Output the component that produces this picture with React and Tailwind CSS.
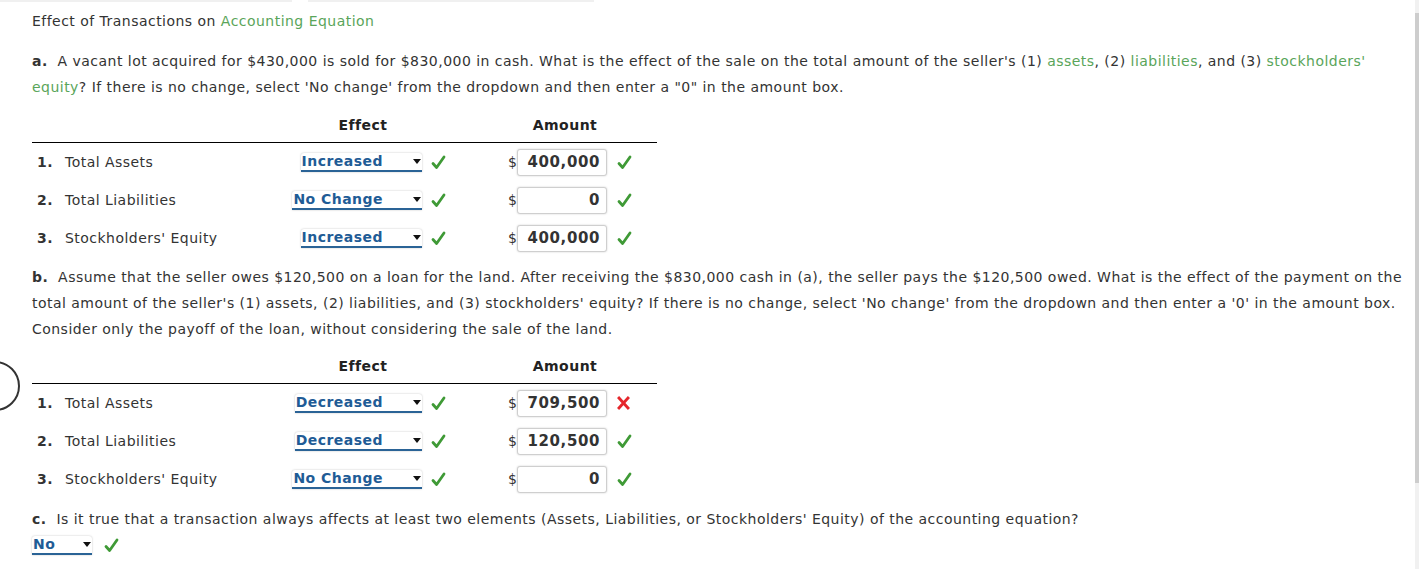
import React from "react";

const FONT = { fontFamily: '"DejaVu Sans", Verdana, sans-serif' };

function Check() {
  return (
    <svg width="15" height="15" viewBox="0 0 15 15" className="block">
      <path d="M2 8.5 L5.6 12.5 L13 2" fill="none" stroke="#3f9a36" strokeWidth="2.8" strokeLinecap="round" strokeLinejoin="round" />
    </svg>
  );
}

function Cross() {
  return (
    <svg width="13" height="14" viewBox="0 0 13 14" className="block">
      <path d="M2 2 L11 12 M11 2 L2 12" fill="none" stroke="#e5262b" strokeWidth="2.8" strokeLinecap="square" />
    </svg>
  );
}

function Arrow() {
  return (
    <svg width="8" height="5" viewBox="0 0 8 5" className="block">
      <path d="M0 0 L8 0 L4 5 Z" fill="#111" />
    </svg>
  );
}

function Select({ value, gap = "ml-[30px]" }) {
  return (
    <div className="inline-flex items-center h-[19px] px-[1px] bg-white rounded-t-[3px] border-b-2 border-[#2a6396] shadow-[0_0_2px_rgba(0,0,0,0.25)]">
      <span className="font-bold text-[#1f5c96] leading-[16px]">{value}</span>
      <span className={gap}>
        <Arrow />
      </span>
    </div>
  );
}

function Row({ n, label, effect, amount, ok }) {
  return (
    <div className="grid grid-cols-[248px_166px_211px] h-[38px] items-center">
      <div className="flex items-center pl-[5px]">
        <span className="font-bold w-[28px]">{n}.</span>
        <span>{label}</span>
      </div>
      <div className="flex items-center justify-end gap-[9px]">
        <Select value={effect} />
        <Check />
      </div>
      <div className="flex items-center pl-[62px]">
        <span className="w-[9px]">$</span>
        <div className="w-[90px] h-[27px] flex items-center justify-end pr-[6px] bg-white border border-[#cfcfcf] rounded-[3px] shadow-[0_0_2px_rgba(0,0,0,0.2)] font-bold text-[15px] tracking-[0.6px]">
          {amount}
        </div>
        <span className="ml-[10px]">{ok ? <Check /> : <Cross />}</span>
      </div>
    </div>
  );
}

function Table({ rows, top }) {
  return (
    <div className={`w-[625px] ${top}`}>
      <div className="grid grid-cols-[248px_166px_211px] border-b border-black pb-[7px] font-bold text-[#222] leading-[20px]">
        <div />
        <div className="text-center">Effect</div>
        <div className="text-center pl-[27px]">Amount</div>
      </div>
      {rows.map((r) => (
        <Row key={r.n} {...r} />
      ))}
    </div>
  );
}

export default function App() {
  const G = "text-[#5aa55a]";
  return (
    <div className="w-[1419px] h-[569px] bg-white overflow-hidden flex text-[14px] tracking-[0.47px] text-[#333]" style={FONT}>
      <div className="flex-1 relative">
        <div className="flex gap-[16px] h-[2px]">
          <div className="w-[292px] bg-[#f0f0f0]" />
          <div className="w-[286px] bg-[#f0f0f0]" />
        </div>
        <div className="absolute left-[-30px] top-[361px] w-[50px] h-[50px] rounded-full border-2 border-[#333]" />
        <div className="pl-[32px] pt-[9px]">
          <div className="leading-[20px]">
            Effect of Transactions on <span className={G}>Accounting Equation</span>
          </div>
          <div className="mt-[17px] leading-[26px] whitespace-nowrap">
            <span className="font-bold">a.</span>&nbsp; A vacant lot acquired for $430,000 is sold for $830,000 in cash. What is the effect of the sale on the total amount of the seller's (1) <span className={G}>assets</span>, (2) <span className={G}>liabilities</span>, and (3) <span className={G}>stockholders'</span>
            <br />
            <span className={G}>equity</span>? If there is no change, select 'No change' from the dropdown and then enter a "0" in the amount box.
          </div>
          <Table
            top="mt-[15px]"
            rows={[
              { n: 1, label: "Total Assets", effect: "Increased", amount: "400,000", ok: true },
              { n: 2, label: "Total Liabilities", effect: "No Change", amount: "0", ok: true },
              { n: 3, label: "Stockholders' Equity", effect: "Increased", amount: "400,000", ok: true },
            ]}
          />
          <div className="mt-[7px] leading-[26px] whitespace-nowrap">
            <span className="font-bold">b.</span>&nbsp; Assume that the seller owes $120,500 on a loan for the land. After receiving the $830,000 cash in (a), the seller pays the $120,500 owed. What is the effect of the payment on the
            <br />
            total amount of the seller's (1) assets, (2) liabilities, and (3) stockholders' equity? If there is no change, select 'No change' from the dropdown and then enter a '0' in the amount box.
            <br />
            Consider only the payoff of the loan, without considering the sale of the land.
          </div>
          <Table
            top="mt-[14px]"
            rows={[
              { n: 1, label: "Total Assets", effect: "Decreased", amount: "709,500", ok: false },
              { n: 2, label: "Total Liabilities", effect: "Decreased", amount: "120,500", ok: true },
              { n: 3, label: "Stockholders' Equity", effect: "No Change", amount: "0", ok: true },
            ]}
          />
          <div className="mt-[8px] leading-[26px] whitespace-nowrap">
            <span className="font-bold">c.</span>&nbsp; Is it true that a transaction always affects at least two elements (Assets, Liabilities, or Stockholders' Equity) of the accounting equation?
          </div>
          <div className="flex items-center h-[26px] gap-[12px]">
            <Select value="No" gap="ml-[28px]" />
            <Check />
          </div>
        </div>
      </div>
      <div className="w-[4px] bg-[#f1f1f1] pt-[13px]">
        <div className="h-[470px] bg-[#cdcdcd]" />
      </div>
    </div>
  );
}
